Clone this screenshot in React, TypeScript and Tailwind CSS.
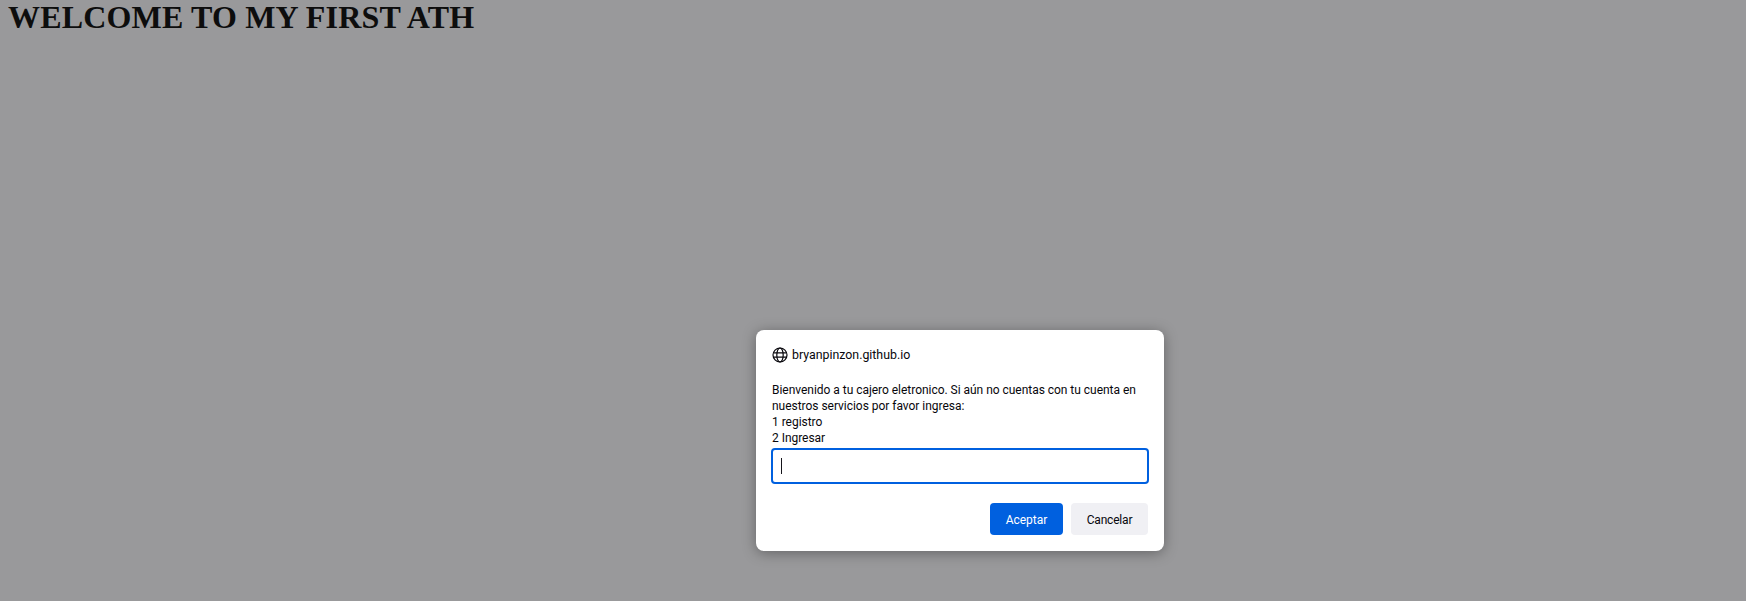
export default function App() {
  return (
    <div className="relative h-[601px] overflow-hidden bg-[#99999b]">
      <h1 className="pl-2 font-['Liberation_Serif',serif] text-[32px] font-bold leading-[34px] tracking-[0.17px] text-[#0d0d0d]">
        WELCOME TO MY FIRST ATH
      </h1>

      {/* prompt dialog */}
      <div className="absolute left-[756px] top-[330px] flex w-[408px] flex-col rounded-lg bg-white p-4 font-['Roboto',sans-serif] text-[12px] leading-4 text-[#08070c] shadow-[0_2px_14px_rgba(0,0,0,0.35)]">
        <div className="flex h-[18px] items-center gap-[4px]">
          <svg width="16" height="16" viewBox="0 0 16 16" fill="none" stroke="#08070c" strokeWidth="1.2">
            <circle cx="8" cy="8" r="7" />
            <ellipse cx="8" cy="8" rx="3.2" ry="7" />
            <path d="M1.4 5.8h13.2M1.4 10.2h13.2" />
          </svg>
          <span className="text-[12.35px]">bryanpinzon.github.io</span>
        </div>
        <div className="mt-[18px] tracking-[-0.03px]">
          Bienvenido a tu cajero eletronico. Si aún no cuentas con tu cuenta en
          <br />
          nuestros servicios por favor ingresa:
          <br />1 registro
          <br />2 Ingresar
        </div>
        <div className="-mx-[1px] mt-[2px] flex h-[36px] items-center rounded-[4px] border-2 border-[#0060df] pl-[8px]">
          <div className="h-[16px] w-px bg-[#15141a]" />
        </div>
        <div className="mt-[19px] flex justify-end gap-2">
          <button className="h-8 w-[73px] rounded-[4px] bg-[#0060df] pt-px text-white">Aceptar</button>
          <button className="h-8 w-[77px] rounded-[4px] bg-[#f0f0f4] pt-px tracking-[-0.2px]">Cancelar</button>
        </div>
      </div>
    </div>
  );
}
